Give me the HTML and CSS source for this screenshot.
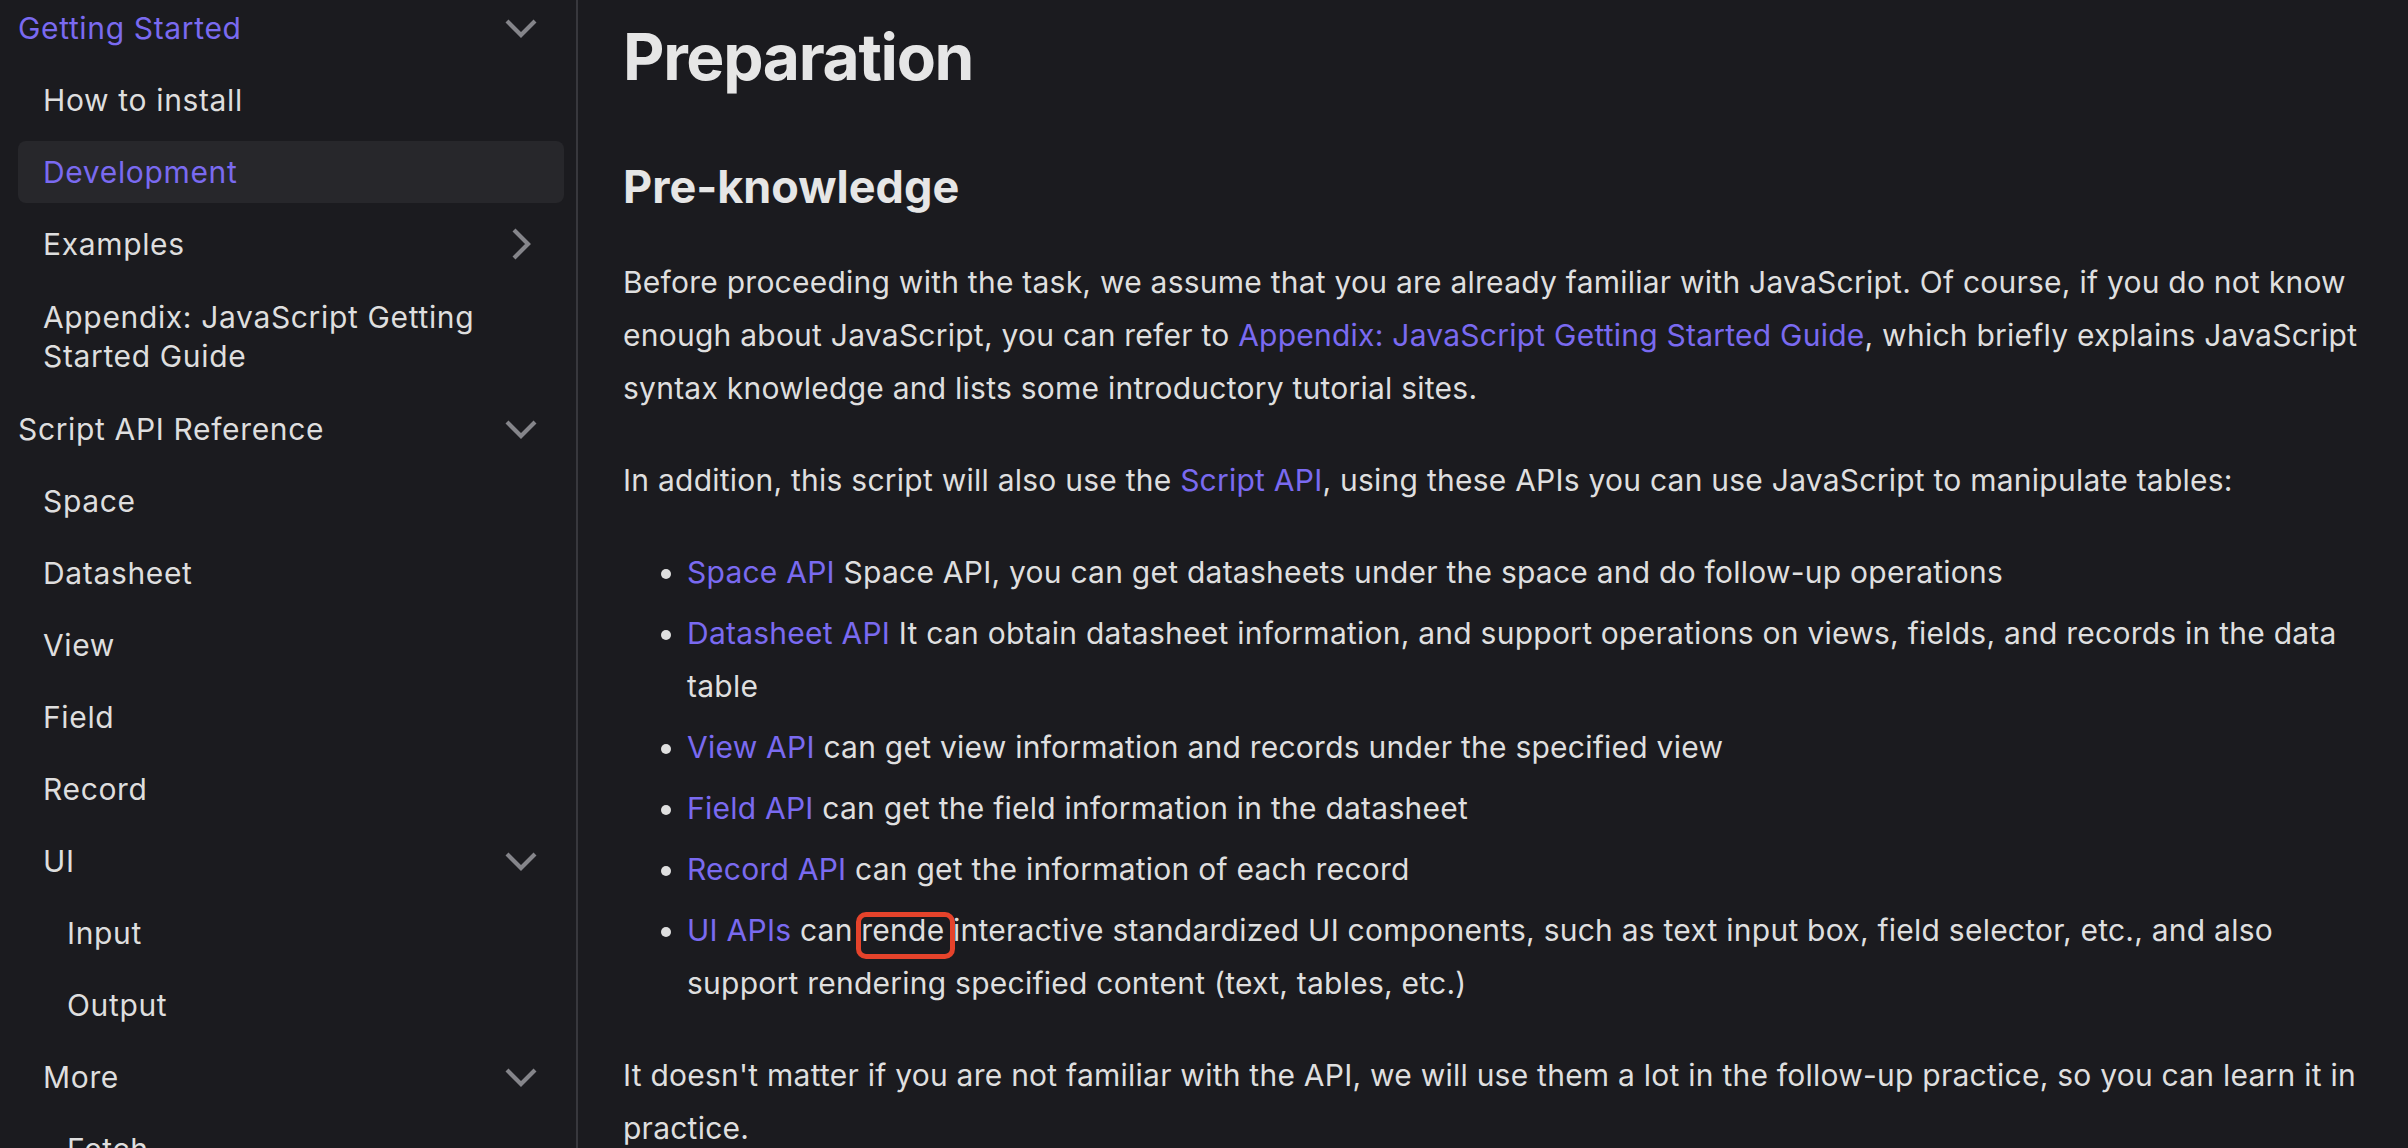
FILE: index.html
```html
<!DOCTYPE html>
<html lang="en">
<head>
<meta charset="utf-8">
<title>Preparation</title>
<link rel="stylesheet" href="styles.css">
</head>
<body>
<aside class="sidebar">
  <nav class="nav">
    <div class="item lvl0 active-group"><span class="label">Getting Started</span><svg class="chev" viewBox="0 0 36 36"><polyline points="4,11 18,25 32,11"/></svg></div>
    <div class="item lvl1"><span class="label">How to install</span></div>
    <div class="item lvl1 current"><span class="label">Development</span></div>
    <div class="item lvl1"><span class="label">Examples</span><svg class="chev" viewBox="0 0 36 36"><polyline points="11,4 25,18 11,32"/></svg></div>
    <div class="item lvl1 two-line"><span class="label">Appendix: JavaScript Getting Started Guide</span></div>
    <div class="item lvl0"><span class="label">Script API Reference</span><svg class="chev" viewBox="0 0 36 36"><polyline points="4,11 18,25 32,11"/></svg></div>
    <div class="item lvl1"><span class="label">Space</span></div>
    <div class="item lvl1"><span class="label">Datasheet</span></div>
    <div class="item lvl1"><span class="label">View</span></div>
    <div class="item lvl1"><span class="label">Field</span></div>
    <div class="item lvl1"><span class="label">Record</span></div>
    <div class="item lvl1"><span class="label">UI</span><svg class="chev" viewBox="0 0 36 36"><polyline points="4,11 18,25 32,11"/></svg></div>
    <div class="item lvl2"><span class="label">Input</span></div>
    <div class="item lvl2"><span class="label">Output</span></div>
    <div class="item lvl1"><span class="label">More</span><svg class="chev" viewBox="0 0 36 36"><polyline points="4,11 18,25 32,11"/></svg></div>
    <div class="item lvl2"><span class="label">Fetch</span></div>
  </nav>
</aside>
<main class="content">
  <h1 class="title">Preparation</h1>
  <h2 class="subtitle">Pre-knowledge</h2>
  <p class="para">Before proceeding with the task, we assume that you are already familiar with JavaScript. Of course, if you do not know enough about JavaScript, you can refer to <a class="link" href="#">Appendix: JavaScript Getting Started Guide</a>, which briefly explains JavaScript syntax knowledge and lists some introductory tutorial sites.</p>
  <p class="para">In addition, this script will also use the <a class="link" href="#">Script API</a>, using these APIs you can use JavaScript to manipulate tables:</p>
  <ul class="list">
    <li><a class="link" href="#">Space API</a> Space API, you can get datasheets under the space and do follow-up operations</li>
    <li><a class="link" href="#">Datasheet API</a> It can obtain datasheet information, and support operations on views, fields, and records in the data table</li>
    <li><a class="link" href="#">View API</a> can get view information and records under the specified view</li>
    <li><a class="link" href="#">Field API</a> can get the field information in the datasheet</li>
    <li><a class="link" href="#">Record API</a> can get the information of each record</li>
    <li><a class="link" href="#">UI APIs</a> can <span class="marked">rende</span> interactive standardized UI components, such as text input box, field selector, etc., and also support rendering specified content (text, tables, etc.)</li>
  </ul>
  <p class="para">It doesn't matter if you are not familiar with the API, we will use them a lot in the follow-up practice, so you can learn it in practice.</p>
</main>
</body>
</html>
```

FILE: styles.css
```css
html, body {
  margin: 0;
  padding: 0;
  height: 100%;
}
body {
  background: #1b1b1f;
  color: #dfdfdf;
  font-family: Inter, "Noto Sans", "DejaVu Sans", sans-serif;
  display: flex;
  overflow: hidden;
}
.sidebar {
  width: 576px;
  flex: 0 0 576px;
  border-right: 2px solid #38383d;
  height: 100vh;
  overflow: hidden;
  box-sizing: content-box;
}
.nav {
  margin-top: -3px;
  display: flex;
  flex-direction: column;
}
.item {
  display: flex;
  align-items: center;
  justify-content: space-between;
  box-sizing: border-box;
  min-height: 62px;
  margin: 0 12px 10px 18px;
  padding: 11.5px 25px 11.5px 0;
  border-radius: 8px;
  font-size: 30px;
  line-height: 39px;
  letter-spacing: 0.65px;
  color: #dedede;
}
.two-line { padding-top: 12.5px; padding-bottom: 12.5px; }
.lvl1 { padding-left: 25px; }
.lvl2 { padding-left: 49px; }
.active-group, .current { color: #7a6af0; }
.current { background: #27272b; }
.chev {
  width: 36px;
  height: 36px;
  flex: 0 0 36px;
  fill: none;
  stroke: #85858a;
  stroke-width: 4.2;
  stroke-linecap: butt;
  stroke-linejoin: miter;
}
.content {
  flex: 1;
  padding: 18px 0 0 45px;
  max-width: 1745px;
  font-size: 30px;
  line-height: 53px;
  letter-spacing: 0.24px;
}
.title {
  margin: 0;
  font-size: 64px;
  line-height: 77px;
  font-weight: 700;
  color: #e6e6e6;
  letter-spacing: -1.3px;
}
.subtitle {
  margin: 64px 0 41px;
  font-size: 45px;
  line-height: 56px;
  font-weight: 700;
  color: #e6e6e6;
  letter-spacing: 0;
}
.para {
  margin: 39px 0;
}
.subtitle + .para { margin-top: 0; }
.link {
  color: #7a6af0;
  text-decoration: none;
}
.list {
  margin: 39px 0;
  padding-left: 64px;
}
.list li + li { margin-top: 8px; }
.marked {
  position: relative;
}
.marked::after {
  content: "";
  position: absolute;
  left: -5px;
  right: -11px;
  top: 0;
  bottom: -11px;
  border: 5px solid #e5432b;
  border-radius: 10px;
}
```
